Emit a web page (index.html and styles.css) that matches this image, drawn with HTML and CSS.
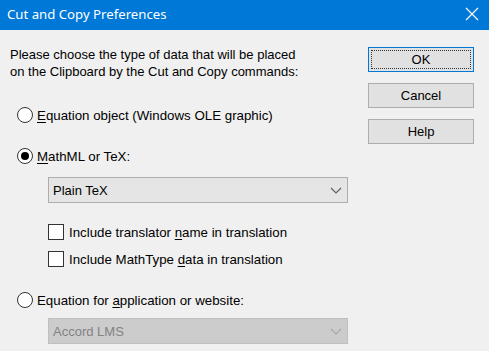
FILE: index.html
```html
<!DOCTYPE html>
<html>
<head>
<meta charset="utf-8">
<link rel="stylesheet" href="styles.css">
</head>
<body>
<div class="titlebar">
  <span class="title">Cut and Copy Preferences</span>
  <svg class="close" width="14" height="14" viewBox="0 0 14 14"><path d="M1 1 L13 13 M13 1 L1 13" stroke="#fff" stroke-width="1.2" fill="none"/></svg>
</div>
<div class="main">
  <div class="left">
    <p class="intro">Please choose the type of data that will be placed<br>on the Clipboard by the Cut and Copy commands:</p>
    <div class="row radio-row r1"><span class="radio"></span><span class="label"><u>E</u>quation object (Windows OLE graphic)</span></div>
    <div class="row radio-row r2"><span class="radio checked"></span><span class="label"><u>M</u>athML or TeX:</span></div>
    <div class="select s1"><span>Plain TeX</span><svg class="chev" width="12" height="7" viewBox="0 0 12 7"><path d="M1 1 L6 6 L11 1" stroke="#606060" stroke-width="1.2" fill="none"/></svg></div>
    <div class="row check-row c1"><span class="check"></span><span class="label">Include translator <u>n</u>ame in translation</span></div>
    <div class="row check-row c2"><span class="check"></span><span class="label">Include MathType <u>d</u>ata in translation</span></div>
    <div class="row radio-row r3"><span class="radio"></span><span class="label">Equation for <u>a</u>pplication or website:</span></div>
    <div class="select s2 disabled"><span>Accord LMS</span><svg class="chev" width="12" height="7" viewBox="0 0 12 7"><path d="M1 1 L6 6 L11 1" stroke="#a8a8a8" stroke-width="1.2" fill="none"/></svg></div>
  </div>
  <div class="right">
    <div class="btn default"><span class="focus">OK</span></div>
    <div class="btn">Cancel</div>
    <div class="btn">Help</div>
  </div>
</div>
</body>
</html>
```
FILE: styles.css
```css
html, body {
  margin: 0;
  padding: 0;
  background: #f0f0f0;
  width: 489px;
  height: 351px;
  overflow: hidden;
}
body {
  font-family: "Liberation Sans", Arial, sans-serif;
  font-size: 13px;
  color: #000;
}
.titlebar {
  height: 30px;
  background: #0078d7;
  display: flex;
  align-items: center;
  justify-content: space-between;
  padding: 0 10px 0 7px;
}
.title {
  color: #fff;
  font-family: "Noto Sans", "Open Sans", sans-serif;
  font-size: 13.2px;
  padding-bottom: 2px;
}
.close {
  margin-top: -2px;
}
.main {
  display: flex;
  justify-content: space-between;
  padding: 16px 15px 0 10px;
}
.left {
  display: flex;
  flex-direction: column;
  width: 338px;
}
.intro {
  margin: 0;
  line-height: 17px;
}
.row {
  display: flex;
  align-items: center;
  height: 20px;
}
.radio-row {
  padding-left: 7px;
}
.r1 { margin-top: 25px; }
.r2 { margin-top: 21px; }
.r3 { margin-top: 21px; }
.label {
  font-size: 13.3px;
}
.check-row {
  padding-left: 38px;
}
.c1 { margin-top: 19px; }
.c2 { margin-top: 7px; }
.radio {
  width: 14px;
  height: 14px;
  border: 1px solid #333;
  border-radius: 50%;
  background: #fff;
  margin-right: 4px;
  display: flex;
  align-items: center;
  justify-content: center;
  flex: none;
}
.radio.checked::after {
  content: "";
  width: 8px;
  height: 8px;
  border-radius: 50%;
  background: #000;
}
.check {
  width: 14px;
  height: 14px;
  border: 1px solid #333;
  background: #fff;
  margin-right: 5px;
  flex: none;
}
.label u {
  text-decoration-thickness: 1px;
  text-underline-offset: 2px;
}
.select {
  margin-left: 38px;
  height: 24px;
  border: 1px solid #adadad;
  background: #e5e5e5;
  display: flex;
  align-items: center;
  justify-content: space-between;
  padding: 0 5px 0 4px;
}
.s1 { margin-top: 11px; }
.s2 { margin-top: 8px; }
.select.disabled {
  background: #cccccc;
  border-color: #bfbfbf;
  color: #838383;
}
.right {
  display: flex;
  flex-direction: column;
  gap: 11px;
  padding-top: 1px;
}
.btn {
  width: 104px;
  height: 23px;
  border: 1px solid #adadad;
  background: #e1e1e1;
  display: flex;
  align-items: center;
  justify-content: center;
}
.btn.default {
  border-color: #0078d7;
  padding: 2px;
  width: 100px;
  height: 19px;
}
.focus {
  flex: 1;
  align-self: stretch;
  border: 1px dotted #333;
  display: flex;
  align-items: center;
  justify-content: center;
}
```
